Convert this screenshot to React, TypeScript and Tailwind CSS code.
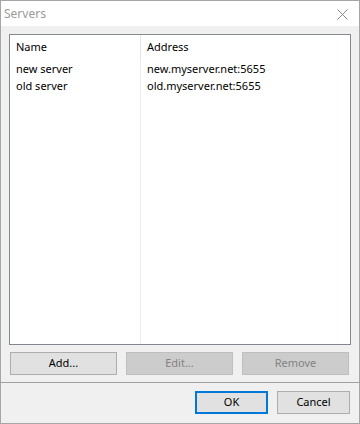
export default function App() {
  const servers = [
    { name: "new server", address: "new.myserver.net:5655" },
    { name: "old server", address: "old.myserver.net:5655" },
  ];

  return (
    <div className="w-[360px] h-[424px] flex flex-col border border-[#a6a6a6] bg-[#f0f0f0] text-[11px] text-black font-['Noto_Sans',sans-serif] select-none">
      {/* title bar */}
      <div className="h-[25px] shrink-0 bg-white flex items-center justify-between pl-[3px] pr-[11px]">
        <span className="text-[12px] text-[#9a9a9a]">Servers</span>
        <svg width="11" height="11" viewBox="0 0 11 11" className="mt-[1px]">
          <path d="M0.5 0.5L10.5 10.5M10.5 0.5L0.5 10.5" stroke="#8a8a8a" strokeWidth="1" />
        </svg>
      </div>

      {/* list view */}
      <div className="mx-[8px] mt-[8px] h-[311px] shrink-0 border border-[#828790] bg-white flex">
        <div className="w-[131px] border-r border-[#e5eef9] flex flex-col">
          <div className="h-[25px] flex items-center pl-[6px] border-r border-[#e5e5e5] -mr-px">Name</div>
          <div className="pt-[1px] flex flex-col">
            {servers.map((s) => (
              <div key={s.name} className="h-[17px] flex items-center pl-[6px]">
                {s.name}
              </div>
            ))}
          </div>
        </div>
        <div className="flex-1 flex flex-col">
          <div className="h-[25px] flex items-center pl-[6px]">Address</div>
          <div className="pt-[1px] flex flex-col">
            {servers.map((s) => (
              <div key={s.address} className="h-[17px] flex items-center pl-[6px]">
                {s.address}
              </div>
            ))}
          </div>
        </div>
      </div>

      {/* list buttons */}
      <div className="mx-[9px] mt-[7px] flex gap-[9px]">
        <button className="w-[107px] h-[23px] border border-[#adadad] bg-[#e1e1e1] flex items-center justify-center">
          Add...
        </button>
        <button disabled className="w-[107px] h-[23px] border border-[#bfbfbf] bg-[#cccccc] text-[#838383] flex items-center justify-center">
          Edit...
        </button>
        <button disabled className="w-[107px] h-[23px] border border-[#bfbfbf] bg-[#cccccc] text-[#838383] flex items-center justify-center">
          Remove
        </button>
      </div>

      {/* footer */}
      <div className="mt-[7px] flex-1 border-t border-[#a0a0a0] flex justify-end items-start gap-[9px] pt-[8px] pr-[9px]">
        <button className="w-[73px] h-[23px] border-2 border-[#0078d7] bg-[#e1e1e1] flex items-center justify-center">
          OK
        </button>
        <button className="w-[73px] h-[23px] border border-[#adadad] bg-[#e1e1e1] flex items-center justify-center">
          Cancel
        </button>
      </div>
    </div>
  );
}
